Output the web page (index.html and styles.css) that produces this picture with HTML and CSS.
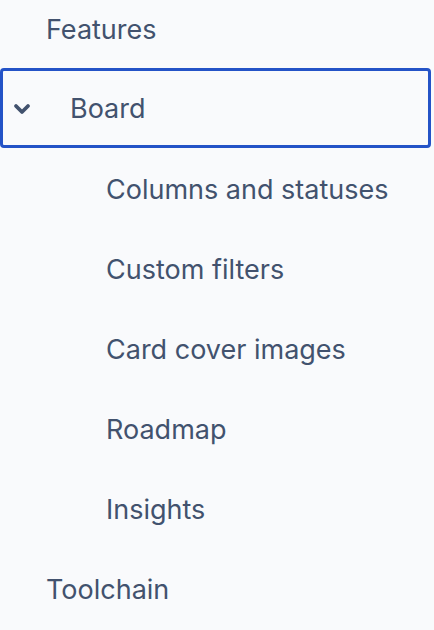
FILE: index.html
```html
<!DOCTYPE html>
<html lang="en">
<head>
    <meta charset="UTF-8">
    <meta name="viewport" content="width=device-width, initial-scale=1.0">
    <title>Navigation</title>
    <link rel="stylesheet" href="styles.css">
</head>
<body>
    <nav class="side-nav">
        <a class="nav-item" href="#">Features</a>

        <div class="nav-group">
            <a class="nav-item nav-parent is-focused" href="#">
                <svg class="chevron" width="18" height="12" viewBox="0 0 18 12">
                    <path d="M3 3 L9 9 L15 3" fill="none" stroke="currentColor" stroke-width="3.8" stroke-linecap="round" stroke-linejoin="round"/>
                </svg>
                <span>Board</span>
            </a>
            <div class="nav-children">
                <a class="nav-item nav-child" href="#">Columns and statuses</a>
                <a class="nav-item nav-child" href="#">Custom filters</a>
                <a class="nav-item nav-child" href="#">Card cover images</a>
                <a class="nav-item nav-child" href="#">Roadmap</a>
                <a class="nav-item nav-child" href="#">Insights</a>
            </div>
        </div>

        <a class="nav-item" href="#">Toolchain</a>
    </nav>
</body>
</html>
```

FILE: styles.css
```css
* {
    margin: 0;
    padding: 0;
    box-sizing: border-box;
}

body {
    font-family: Inter, 'Noto Sans', sans-serif;
    background: #f9fafc;
    color: #42526e;
    width: 434px;
    height: 630px;
    overflow: hidden;
}

.side-nav {
    display: flex;
    flex-direction: column;
    margin-top: -12px;
}

.nav-item {
    display: flex;
    align-items: center;
    height: 80px;
    padding-top: 2px;
    padding-left: 46px;
    font-size: 27px;
    color: #42526e;
    text-decoration: none;
}

.nav-parent {
    padding-left: 0;
    padding-top: 1px;
    width: 431px;
    border: 3.5px solid #2453c7;
    border-radius: 4px;
}

.chevron {
    margin-left: 10px;
    margin-right: 39px;
    flex-shrink: 0;
}

.nav-children {
    display: flex;
    flex-direction: column;
}

.nav-child {
    padding-left: 106px;
}
```
